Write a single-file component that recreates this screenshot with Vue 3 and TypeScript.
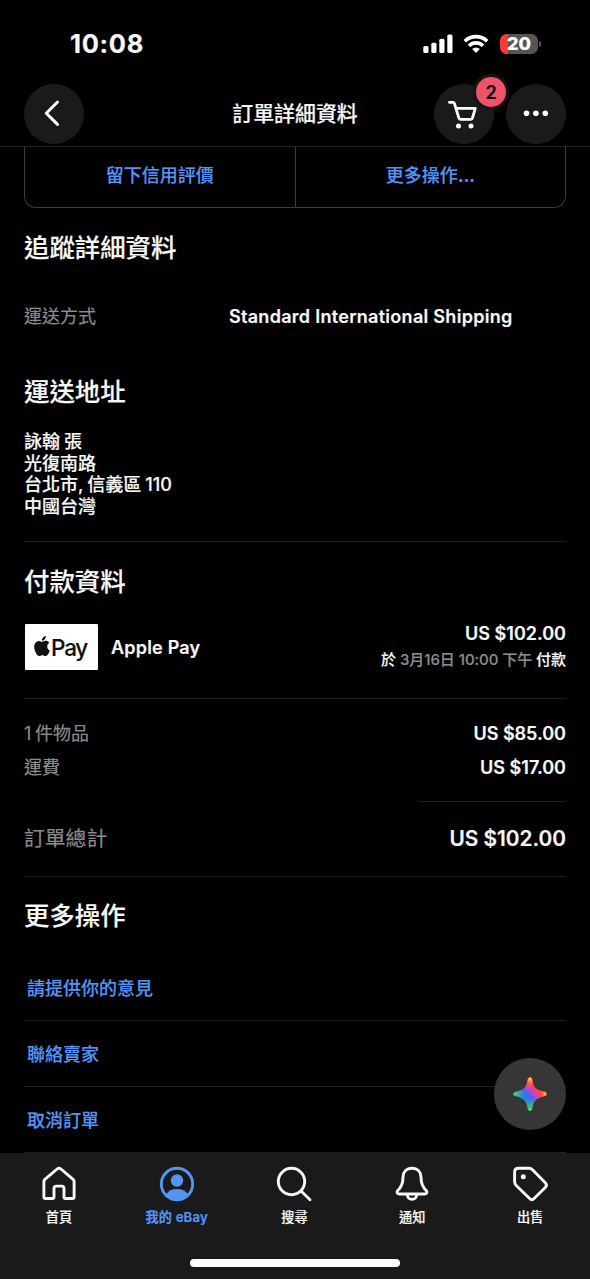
<script setup lang="ts">
interface Amount {
  label: string
  value: string
}

type TabIcon = 'home' | 'profile' | 'search' | 'bell' | 'tag'

interface Tab {
  label: string
  icon: TabIcon
  active?: boolean
}

const addressLines: string[] = ['詠翰 張', '光復南路', '台北市, 信義區 110', '中國台灣']

const amounts: Amount[] = [
  { label: '1 件物品', value: 'US $85.00' },
  { label: '運費', value: 'US $17.00' },
]

const moreActions: string[] = ['請提供你的意見', '聯絡賣家', '取消訂單']

const tabs: Tab[] = [
  { label: '首頁', icon: 'home' },
  { label: '我的 eBay', icon: 'profile', active: true },
  { label: '搜尋', icon: 'search' },
  { label: '通知', icon: 'bell' },
  { label: '出售', icon: 'tag' },
]
</script>

<template>
  <div class="screen">
    <div class="status">
      <span class="clock">10:08</span>
      <div class="indicators">
        <svg class="signal" width="30" height="20" viewBox="0 0 30 20" fill="#fff">
          <rect x="0.3" y="12" width="5.2" height="7" rx="1.5" />
          <rect x="8.3" y="8.8" width="5.2" height="10.2" rx="1.5" />
          <rect x="16.3" y="4.8" width="5.2" height="14.2" rx="1.5" />
          <rect x="24.3" y="0.4" width="5.2" height="18.6" rx="1.5" />
        </svg>
        <svg class="wifi" width="26" height="20" viewBox="0 0 26 20" fill="none" stroke="#fff" stroke-width="3.7">
          <path d="M1.8 7.2a16 16 0 0 1 22.4 0" />
          <path d="M6 11.7a10 10 0 0 1 14 0" />
          <path d="M13 19l-3.9-3.9a5.6 5.6 0 0 1 7.8 0z" fill="#fff" stroke="none" />
        </svg>
        <div class="battery">
          <div class="cell"><span>20</span></div>
          <i class="cap"></i>
        </div>
      </div>
    </div>

    <header class="nav">
      <button class="round" aria-label="返回">
        <svg width="60" height="60" viewBox="0 0 60 60" fill="none" stroke="#fff" stroke-width="3" stroke-linecap="round" stroke-linejoin="round">
          <path d="M33.5 18 22.3 29.2 33.5 40.4" />
        </svg>
      </button>
      <h1>訂單詳細資料</h1>
      <div class="nav-right">
        <button class="round cart" aria-label="購物車">
          <svg width="60" height="60" viewBox="0 0 60 60" fill="none" stroke="#fff" stroke-width="2.8" stroke-linecap="round" stroke-linejoin="round">
            <path d="M15.4 18.3h3.6c.8 0 1.2.4 1.4 1.1l4.5 14.8c.2.7.7 1.1 1.5 1.1h10.4c.8 0 1.4-.4 1.6-1.1l2.9-9.8H22" />
            <circle cx="24.5" cy="42" r="2.5" fill="#fff" stroke="none" />
            <circle cx="37" cy="42" r="2.5" fill="#fff" stroke="none" />
          </svg>
          <span class="badge">2</span>
        </button>
        <button class="round" aria-label="更多">
          <svg width="60" height="60" viewBox="0 0 60 60" fill="#fff">
            <circle cx="20.5" cy="29.3" r="2.8" />
            <circle cx="29.9" cy="29.3" r="2.8" />
            <circle cx="39.3" cy="29.3" r="2.8" />
          </svg>
        </button>
      </div>
    </header>

    <main class="content">
      <div class="card-actions">
        <a>留下信用評價</a>
        <a>更多操作<b>...</b></a>
      </div>

      <section class="tracking">
        <h2>追蹤詳細資料</h2>
        <div class="method">
          <span class="muted">運送方式</span>
          <strong>Standard International Shipping</strong>
        </div>
      </section>

      <section class="address">
        <h2>運送地址</h2>
        <address>
          <span v-for="line in addressLines" :key="line">{{ line }}</span>
        </address>
      </section>

      <section class="payment">
        <h2>付款資料</h2>
        <div class="pay-row">
          <div class="pay-logo">
            <svg width="16" height="20" viewBox="2 0 20 24" fill="#111" preserveAspectRatio="none">
              <path d="M12.152 6.896c-.948 0-2.415-1.078-3.960-1.040-2.040.027-3.910 1.183-4.961 3.014-2.117 3.675-.546 9.103 1.519 12.090 1.013 1.454 2.208 3.090 3.792 3.039 1.520-.065 2.090-.987 3.935-.987 1.831 0 2.350.987 3.960.948 1.637-.026 2.676-1.480 3.676-2.948 1.156-1.688 1.636-3.325 1.662-3.415-.039-.013-3.182-1.221-3.220-4.857-.026-3.040 2.480-4.494 2.597-4.559-1.429-2.090-3.623-2.324-4.390-2.376-2-.156-3.675 1.090-4.610 1.090zM15.530 3.830c.843-1.012 1.400-2.427 1.245-3.830-1.207.052-2.662.805-3.532 1.818-.780.896-1.454 2.338-1.273 3.714 1.338.104 2.715-.688 3.559-1.701" />
            </svg>
            <span>Pay</span>
          </div>
          <span class="pay-name">Apple Pay</span>
          <div class="pay-info">
            <strong>US $102.00</strong>
            <p>於 <span>3月16日 10:00 下午</span> 付款</p>
          </div>
        </div>
      </section>

      <section class="totals">
        <div v-for="row in amounts" :key="row.label" class="amount">
          <span class="muted">{{ row.label }}</span>
          <strong>{{ row.value }}</strong>
        </div>
        <div class="short-line"></div>
        <div class="total">
          <span class="muted">訂單總計</span>
          <strong>US $102.00</strong>
        </div>
      </section>

      <section class="more">
        <h2>更多操作</h2>
        <a v-for="action in moreActions" :key="action">{{ action }}</a>
      </section>
    </main>

    <button class="assistant" aria-label="AI">
      <svg width="36" height="36" viewBox="-18 -18 36 36">
        <defs>
          <linearGradient id="spark" gradientUnits="userSpaceOnUse" x1="8" y1="-8" x2="-8" y2="8">
            <stop offset="0.12" stop-color="#ff4058" />
            <stop offset="0.4" stop-color="#b548d8" />
            <stop offset="0.56" stop-color="#5360f2" />
            <stop offset="0.88" stop-color="#2486e0" />
          </linearGradient>
          <radialGradient id="tip-top" gradientUnits="userSpaceOnUse" cx="0" cy="-17" r="12">
            <stop offset="0.15" stop-color="#ffc53a" />
            <stop offset="0.55" stop-color="#ff6a3c" stop-opacity=".8" />
            <stop offset="1" stop-color="#ff4060" stop-opacity="0" />
          </radialGradient>
          <radialGradient id="tip-right" gradientUnits="userSpaceOnUse" cx="17" cy="0" r="13">
            <stop offset="0.1" stop-color="#ffb43a" />
            <stop offset="0.45" stop-color="#ff4a42" />
            <stop offset="1" stop-color="#ff3a62" stop-opacity="0" />
          </radialGradient>
          <radialGradient id="tip-left" gradientUnits="userSpaceOnUse" cx="-17" cy="0" r="12">
            <stop offset="0.15" stop-color="#4fd64c" />
            <stop offset="1" stop-color="#28b0b0" stop-opacity="0" />
          </radialGradient>
          <radialGradient id="tip-bottom" gradientUnits="userSpaceOnUse" cx="0" cy="17" r="13">
            <stop offset="0.15" stop-color="#4fd64c" />
            <stop offset="1" stop-color="#28b0b0" stop-opacity="0" />
          </radialGradient>
          <path id="spark-shape" d="M-2.1-15.2Q0-18.4 2.1-15.2C3-7 5.3-4.2 15-2.2Q18.4 0 15 2C6 4 3.4 7 2 15.4Q0 18.6-2 15.4C-3.4 7-6 4-15 2Q-18.4 0-15-2C-6-4-3.3-6.5-2.1-15.2Z" />
        </defs>
        <use href="#spark-shape" fill="url(#spark)" />
        <use href="#spark-shape" fill="url(#tip-top)" />
        <use href="#spark-shape" fill="url(#tip-right)" />
        <use href="#spark-shape" fill="url(#tip-left)" />
        <use href="#spark-shape" fill="url(#tip-bottom)" />
      </svg>
    </button>

    <footer class="tabbar">
      <nav>
        <a v-for="tab in tabs" :key="tab.icon" :class="{ active: tab.active }">
          <svg width="40" height="40" viewBox="0 0 40 40" fill="none" stroke="currentColor" stroke-width="2.9" stroke-linecap="round" stroke-linejoin="round">
            <path v-if="tab.icon === 'home'" d="M4.9 17.7c0-1 .3-1.6 1-2.3L18.1 5c1.3-1.1 2.5-1.1 3.8 0L34.1 15.4c.7.7 1 1.3 1 2.3V33.1c0 .9-.5 1.4-1.4 1.4h-7.3c-.9 0-1.4-.5-1.4-1.4V24.3c0-1.5-.8-2.2-2.2-2.2h-5.6c-1.4 0-2.2.7-2.2 2.2V33.1c0 .9-.5 1.4-1.4 1.4H6.3C5.4 34.5 4.9 34 4.9 33.1Z" />
            <template v-else-if="tab.icon === 'profile'">
              <circle cx="20" cy="20" r="15.7" />
              <circle cx="20" cy="16.5" r="6.2" fill="currentColor" stroke="none" />
              <path d="M9.2 30.2C11.3 26.8 15.2 25 20 25s8.7 1.8 10.8 5.2C28.3 33.6 24.6 36 20 36S11.7 33.6 9.2 30.2Z" fill="currentColor" stroke="none" />
            </template>
            <template v-else-if="tab.icon === 'search'">
              <circle cx="17.5" cy="17.5" r="13.2" />
              <path d="M27 27 36 35.7" />
            </template>
            <template v-else-if="tab.icon === 'bell'">
              <path d="M20 4.2c5.5 0 9 3.7 9 9 0 6.2 1.2 9.6 5.2 13.3 1.4 1.5.7 3.5-1.3 3.5H7.1c-2 0-2.7-2-1.3-3.5 4-3.7 5.2-7.1 5.2-13.3 0-5.3 3.5-9 9-9Z" />
              <path d="M15.4 30.5v.7c0 2.4 2 4 4.6 4s4.6-1.6 4.6-4v-.7" />
            </template>
            <template v-else>
              <path d="M4.6 8.2c0-2.6 1.3-4 3.9-4h10.4c1.5 0 2.6.4 3.6 1.5L35.3 18.8c1.5 1.5 1.5 3.2 0 4.7L24.1 34.5c-1.5 1.5-3 1.5-4.5 0L6 21.3c-1-1-1.4-2-1.4-3.5Z" />
              <circle cx="13.3" cy="12.7" r="2.5" fill="currentColor" stroke="none" />
            </template>
          </svg>
          <span>{{ tab.label }}</span>
        </a>
      </nav>
      <div class="home-indicator"></div>
    </footer>
  </div>
</template>

<style>
html,
body {
  background: #000;
}
</style>

<style scoped>
.screen {
  position: relative;
  width: 590px;
  height: 1279px;
  overflow: hidden;
  box-sizing: border-box;
  display: flex;
  flex-direction: column;
  background: #000;
  color: #f7f7f7;
  font-family: Inter, "Noto Sans CJK TC", sans-serif;
  font-weight: 500;
  font-size: 18px;
  -webkit-text-stroke: 0.18px currentColor;
}

h1,
h2,
p {
  margin: 0;
  font-weight: 500;
}

button {
  border: 0;
  padding: 0;
  color: inherit;
  font: inherit;
}

svg {
  display: block;
  flex: none;
}

strong {
  font-weight: 600;
}

.muted {
  color: #8c8c8c;
  font-weight: 400;
}

.status {
  flex: none;
  height: 84px;
  display: flex;
  justify-content: space-between;
  padding: 0 49px 0 70px;
}

.clock {
  line-height: 88px;
  font-size: 25.5px;
  font-weight: 700;
  letter-spacing: 0.7px;
}

.indicators {
  display: flex;
  padding-top: 34px;
}

.wifi {
  margin-left: 10px;
}

.battery {
  display: flex;
  align-items: center;
  height: 20px;
  margin-left: 11px;
}

.cell {
  width: 38px;
  height: 20px;
  border-radius: 6.5px;
  background: linear-gradient(90deg, #ff3b30 0 8px, #555 8px);
  text-align: center;
  font-size: 18px;
  font-weight: 800;
  line-height: 20px;
  color: #fff;
}

.cap {
  width: 2px;
  height: 6px;
  margin-left: 1px;
  border-radius: 0 2px 2px 0;
  background: #555;
}

.nav {
  flex: none;
  height: 62px;
  display: flex;
  align-items: flex-start;
  justify-content: space-between;
  padding: 0 24px;
  border-bottom: 1px solid #222;
}

.nav h1 {
  font-size: 20.9px;
  line-height: 60px;
  margin-left: 72px;
}

.nav-right {
  display: flex;
  gap: 12px;
}

.round {
  width: 60px;
  height: 60px;
  border-radius: 50%;
  background: #1a1a1a;
}

.cart {
  position: relative;
}

.badge {
  position: absolute;
  left: 39px;
  top: -10px;
  width: 30px;
  height: 30px;
  border: 3px solid #151515;
  border-radius: 50%;
  background: #ee5369;
  color: #111;
  font-size: 18px;
  font-weight: 600;
  line-height: 31px;
}

.content {
  flex: 1;
  min-height: 0;
  overflow: hidden;
  padding: 0 24px;
}

.card-actions {
  display: flex;
  height: 60px;
  border: 1.5px solid #3c3c3c;
  border-top: 0;
  border-radius: 0 0 12px 12px;
}

.card-actions a {
  flex: 1;
  text-align: center;
  line-height: 57px;
  color: #5594f7;
}

.card-actions a + a {
  border-left: 1px solid #3c3c3c;
}

.card-actions b {
  font-weight: 700;
  letter-spacing: -0.3px;
}

h2 {
  font-size: 25.4px;
  line-height: 37px;
  margin-bottom: -1px;
}

.tracking {
  padding-top: 21px;
}

.method {
  display: flex;
  margin-top: 40px;
  line-height: 24px;
}

.method .muted {
  width: 205px;
}

.method strong {
  letter-spacing: 0.29px;
}

.address {
  padding: 44px 0 24px;
  border-bottom: 1px solid #1e1e1e;
}

address {
  display: flex;
  flex-direction: column;
  margin-top: 22px;
  font-style: normal;
  line-height: 21.6px;
  word-spacing: -0.8px;
}

.payment {
  height: 157px;
  box-sizing: border-box;
  padding-top: 21px;
  border-bottom: 1px solid #1e1e1e;
}

.pay-row {
  display: flex;
  margin-top: 24px;
}

.pay-logo {
  width: 73px;
  height: 46px;
  margin: 1px 0 0 1px;
  display: flex;
  box-sizing: border-box;
  padding: 12px 0 0 9px;
  border-radius: 1px;
  background: #fff;
}

.pay-logo span {
  color: #111;
  font-size: 22.5px;
  font-weight: 500;
  line-height: 23px;
  letter-spacing: -1.2px;
  margin-left: 1px;
}

.pay-name {
  margin-left: 13px;
  line-height: 49px;
  font-weight: 600;
  letter-spacing: 0.2px;
}

.pay-info {
  margin-left: auto;
  text-align: right;
}

.pay-info strong {
  display: block;
  line-height: 21px;
}

.pay-info p {
  font-size: 15px;
  line-height: 22px;
  margin-top: 5px;
  letter-spacing: -0.05px;
}

.pay-info p span {
  color: #8c8c8c;
}

.totals {
  height: 178px;
  box-sizing: border-box;
  padding-top: 18px;
  border-bottom: 1px solid #1e1e1e;
}

.amount,
.total {
  display: flex;
  justify-content: space-between;
  line-height: 33.5px;
}

.amount .muted {
  word-spacing: -1.5px;
}

.short-line {
  width: 148px;
  height: 1px;
  margin: 17px 0 0 auto;
  background: #1e1e1e;
}

.total {
  font-size: 20.8px;
  line-height: 36px;
  margin-top: 19px;
}

.more {
  padding-top: 20px;
}

.more h2 {
  margin-bottom: 21px;
}

.more a {
  display: block;
  height: 66px;
  box-sizing: border-box;
  padding-left: 3px;
  line-height: 68px;
  color: #5594f7;
  border-bottom: 1px solid #1e1e1e;
}

.assistant {
  position: absolute;
  left: 494px;
  top: 1058px;
  width: 72px;
  height: 72px;
  border-radius: 50%;
  background: #363636;
  display: flex;
  align-items: center;
  justify-content: center;
}

.tabbar {
  flex: none;
  height: 126px;
  background: #1a1a1a;
}

.tabbar nav {
  display: flex;
  padding-top: 11px;
}

.tabbar a {
  width: 117.8px;
  display: flex;
  flex-direction: column;
  align-items: center;
  color: #f7f7f7;
}

.tabbar a span {
  font-size: 13.2px;
  line-height: 20px;
  margin-top: 3px;
}

.tabbar a.active {
  color: #5594f7;
}

.tabbar a.active span {
  font-weight: 600;
  letter-spacing: 0.15px;
}

.home-indicator {
  width: 210px;
  height: 8px;
  margin: 32px auto 0;
  border-radius: 4px;
  background: #fff;
}
</style>
